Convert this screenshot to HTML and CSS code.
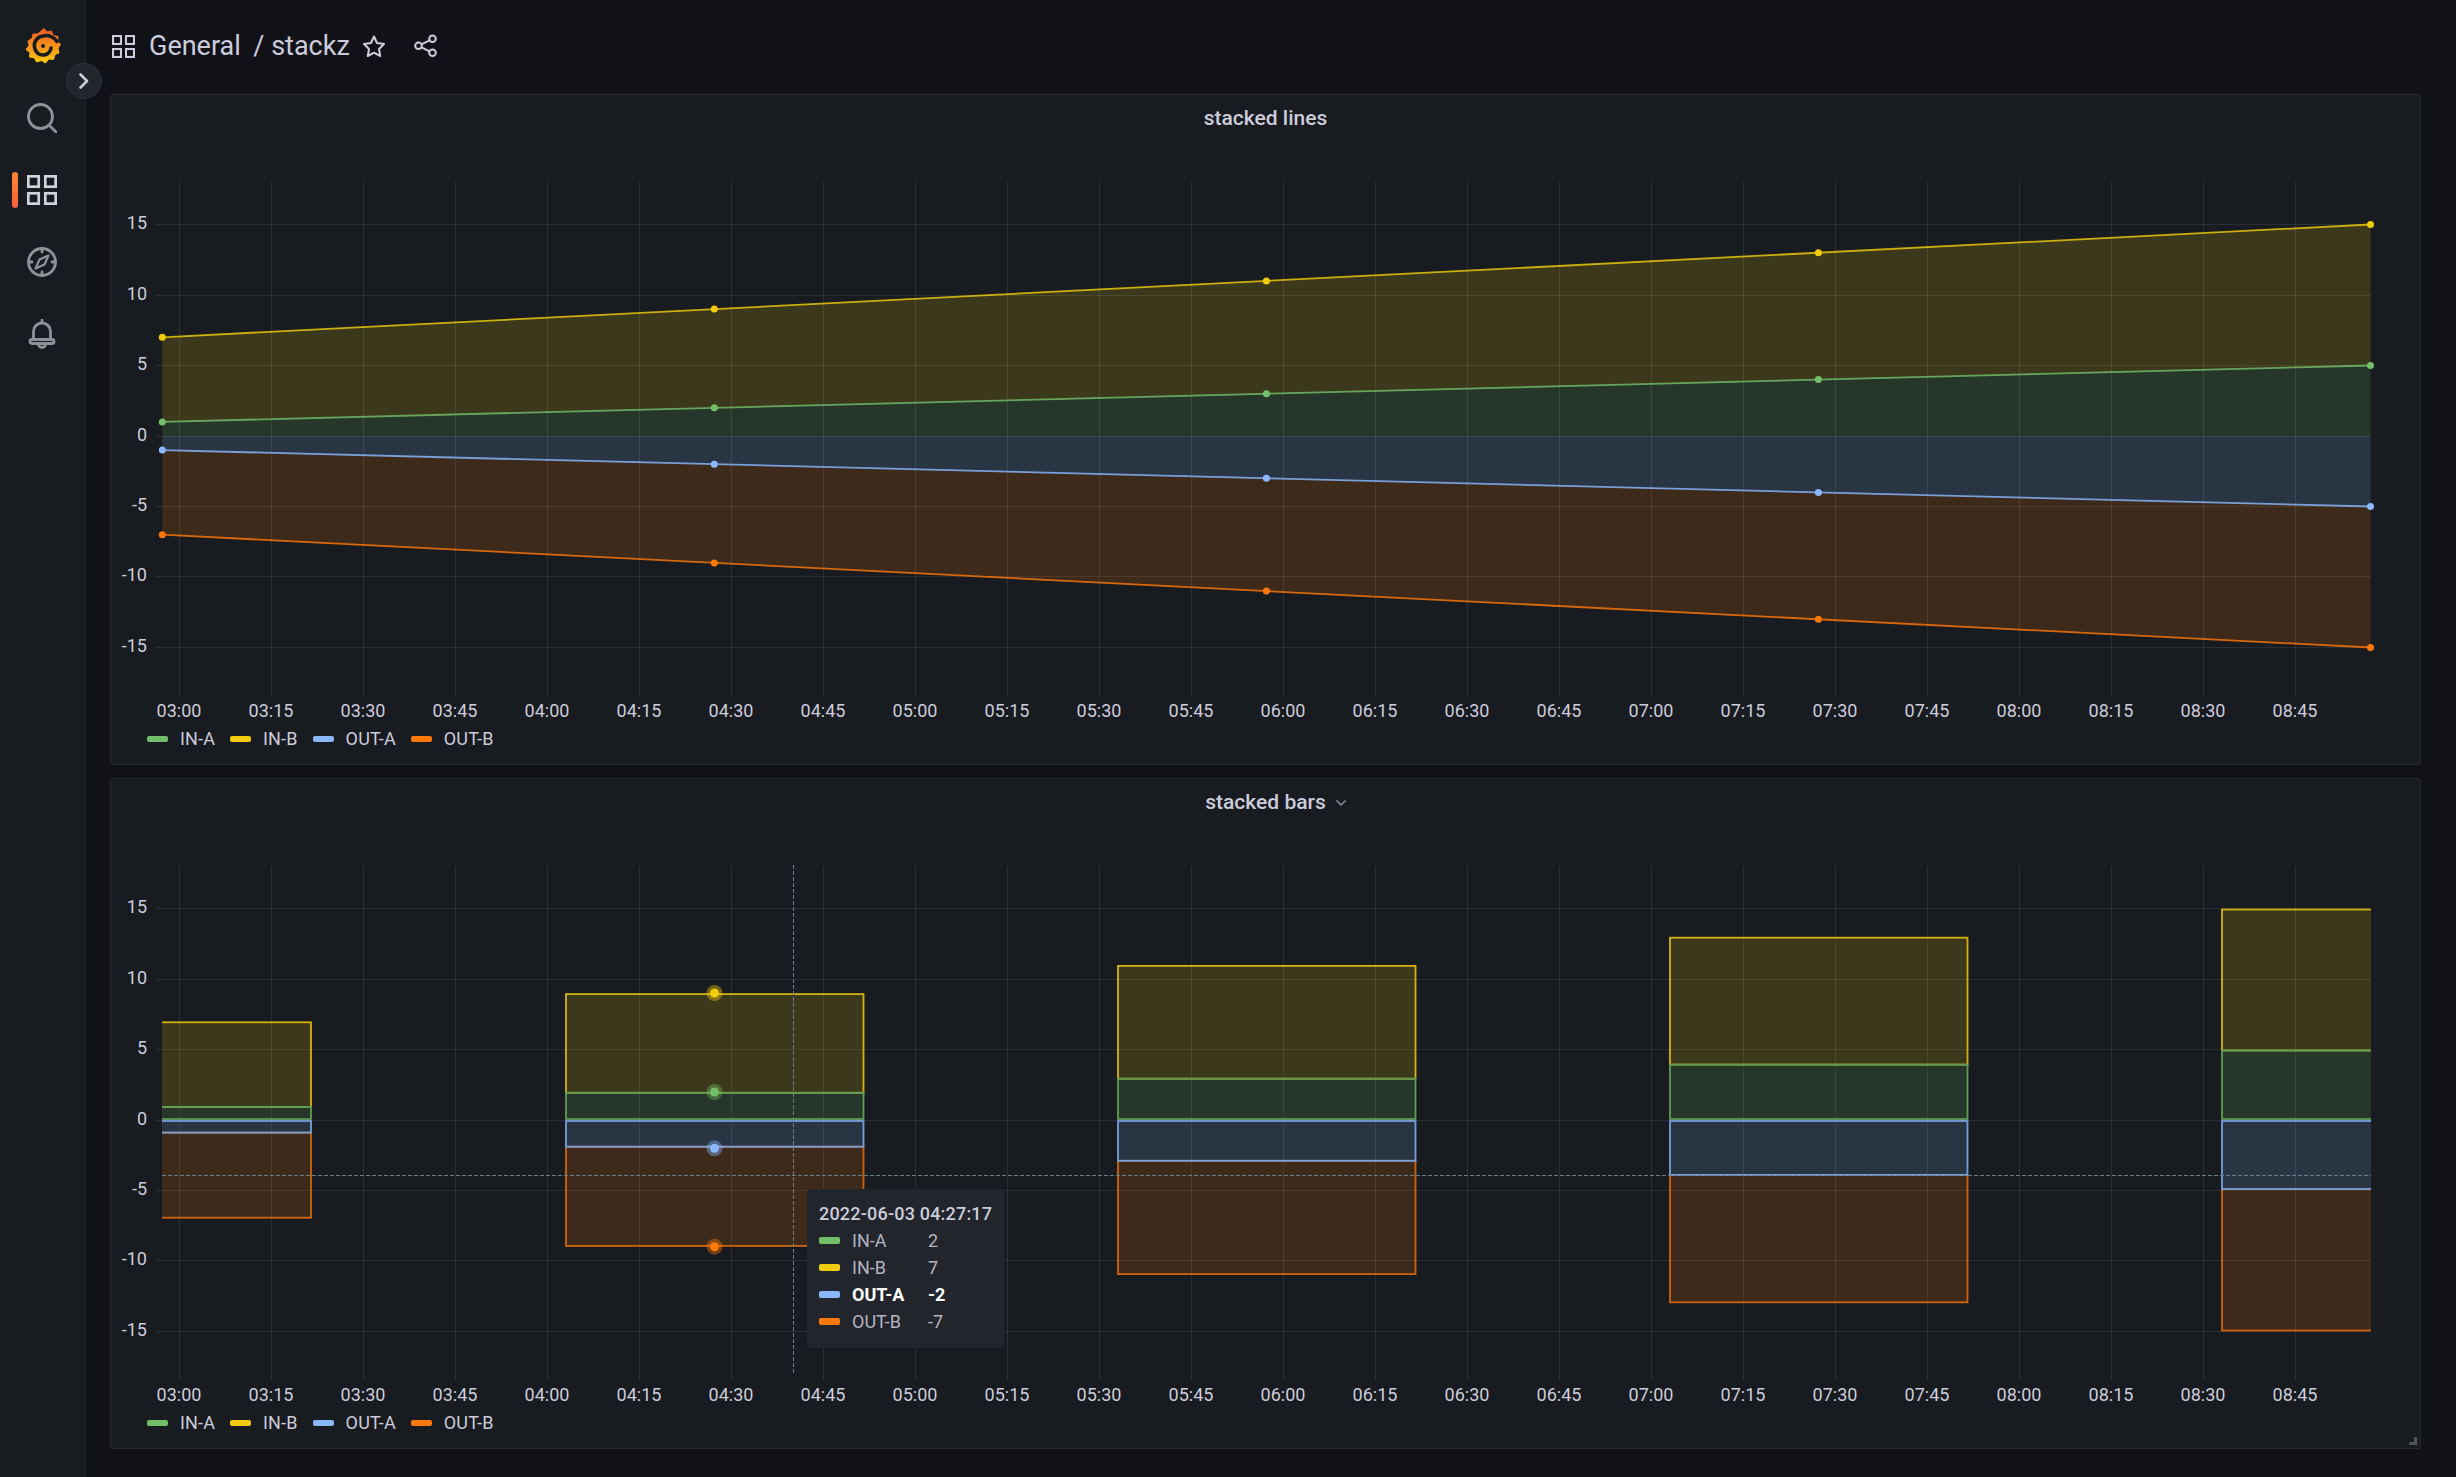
FILE: index.html
```html
<!DOCTYPE html>
<html lang="en">
<head>
<meta charset="utf-8">
<title>stackz</title>
<link rel="stylesheet" href="styles.css">
</head>
<body>
<aside class="sidebar">
  <svg class="logo" viewBox="0 0 36 36">
    <defs><linearGradient id="lg" x1="0" y1="0" x2="0" y2="1"><stop offset="0" stop-color="#f05a28"/><stop offset="1" stop-color="#fbca0a"/></linearGradient></defs>
    <polygon class="logo-body" points="15.5,3.5 19,0.5 22,4 26.5,3 28,7.5 33,8.5 32.5,13 35.5,16.5 33,20 34,25 30,26.5 28.5,31.5 24,31 20.5,35 16.5,32.5 11.5,34 9.5,30 4.5,29 5,24.5 1,21.5 4,17.5 3,13 7,10.5 8,6 12.5,6"/>
    <path class="logo-dark" d="M32 13.5C29 8.500 23 6.500 18 8A9.600 9.600 0 0 0 9.500 19C10 24 14 27.500 19 27A8 8 0 0 0 26 20"/>
    <circle class="logo-spot" cx="18" cy="18" r="2"/>
  </svg>
  <nav class="side-icons">
    <svg class="side-icon" viewBox="0 0 30 30"><circle cx="13.500" cy="13.500" r="12"/><path d="M22.500 22.500L29 29"/></svg>
    <div class="side-active">
      <span class="active-bar"></span>
      <svg class="side-icon on" viewBox="2 2 20 20"><rect x="2.900" y="2.900" width="6.900" height="6.900"/><rect x="14.200" y="2.900" width="6.900" height="6.900"/><rect x="2.900" y="14.200" width="6.900" height="6.900"/><rect x="14.200" y="14.200" width="6.900" height="6.900"/></svg>
    </div>
    <svg class="side-icon" viewBox="0 0 30 30"><circle cx="15" cy="15" r="13.500"/><path d="M15 1.500V5M15 25v3.500M1.500 15H5M25 15h3.500"/><path class="needle" d="M21.500 8.500L17.500 17.500 8.500 21.500 12.500 12.500Z"/></svg>
    <svg class="side-icon" viewBox="0 0 30 30"><path d="M15 1v3M6.500 20v-7.500C6.500 7.500 10.500 4 15 4s8.500 3.500 8.500 8.500V20M5 20.500h20c1.500 0 2 1 2 2s-.5 2-2 2H5c-1.500 0-2-1-2-2s.5-2 2-2ZM11.500 25c0 2 1.500 3.500 3.500 3.500s3.500-1.500 3.500-3.500"/></svg>
  </nav>
</aside>
<button class="toggle" type="button" aria-label="Expand"><svg viewBox="0 0 12 18"><path d="M2.500 2.500L9 9l-6.500 6.500"/></svg></button>
<main class="main">
  <header class="topbar">
    <svg class="nav-icon grid-icon" viewBox="2 2 20 20"><rect x="2.900" y="2.900" width="6.900" height="6.900"/><rect x="14.200" y="2.900" width="6.900" height="6.900"/><rect x="2.900" y="14.200" width="6.900" height="6.900"/><rect x="14.200" y="14.200" width="6.900" height="6.900"/></svg>
    <h1 class="crumbs"><span>General</span><span class="crumb-sep">/ stackz</span></h1>
    <svg class="nav-icon star" viewBox="0 0 24 24"><polygon points="12,2.500 15,9 22,10 17,15 18.200,22 12,18.700 5.800,22 7,15 2,10 9,9"/></svg>
    <svg class="nav-icon share" viewBox="0 0 24 24"><circle cx="19.500" cy="4.700" r="3.300"/><circle cx="5.500" cy="11.800" r="3.300"/><circle cx="19.500" cy="18.800" r="3.300"/><path d="M8.500 10.300L16.500 6.300M8.500 13.300L16.500 17.300"/></svg>
  </header>
  <section class="panels">
    <article class="panel">
      <h2 class="panel-title"><span class="title-text">stacked lines</span></h2>
      <svg class="chart" viewBox="111 165 2309 560">
        <defs>
          <g id="grid" class="grid">
            <path d="M156 224.500H2371M156 295.500H2371M156 365.500H2371M156 436.500H2371M156 506.500H2371M156 576.500H2371M156 647.500H2371"/>
            <path d="M179.500 182V696M271.500 182V696M363.500 182V696M455.500 182V696M547.500 182V696M639.500 182V696M731.500 182V696M823.500 182V696M915.500 182V696M1007.500 182V696M1099.500 182V696M1191.500 182V696M1283.500 182V696M1375.500 182V696M1467.500 182V696M1559.500 182V696M1651.500 182V696M1743.500 182V696M1835.500 182V696M1927.500 182V696M2019.500 182V696M2111.500 182V696M2203.500 182V696M2295.500 182V696"/>
          </g>
          <clipPath id="plot"><rect x="162" y="170" width="2209" height="530"/></clipPath>
        </defs>
        <use href="#grid"/>
        <polygon class="fill yellow" points="162.300,337.300 2370.500,224.500 2370.500,365.500 162.300,421.900"/>
        <polygon class="fill green" points="162.300,421.900 2370.500,365.500 2370.500,436 162.300,436"/>
        <polygon class="fill blue" points="162.300,436 2370.500,436 2370.500,506.500 162.300,450.100"/>
        <polygon class="fill orange" points="162.300,450.100 2370.500,506.500 2370.500,647.500 162.300,534.700"/>
        <path class="line yellow" d="M162.300 337.300L2370.500 224.500"/>
        <path class="line green" d="M162.300 421.900L2370.500 365.500"/>
        <path class="line blue" d="M162.300 450.100L2370.500 506.500"/>
        <path class="line orange" d="M162.300 534.700L2370.500 647.500"/>
        <g class="dots yellow"><circle cx="162.300" cy="337.300" r="3.500"/><circle cx="714.300" cy="309.100" r="3.500"/><circle cx="1266.400" cy="280.900" r="3.500"/><circle cx="1818.400" cy="252.700" r="3.500"/><circle cx="2370.500" cy="224.500" r="3.500"/></g>
        <g class="dots green"><circle cx="162.300" cy="421.900" r="3.500"/><circle cx="714.300" cy="407.800" r="3.500"/><circle cx="1266.400" cy="393.700" r="3.500"/><circle cx="1818.400" cy="379.600" r="3.500"/><circle cx="2370.500" cy="365.500" r="3.500"/></g>
        <g class="dots blue"><circle cx="162.300" cy="450.100" r="3.500"/><circle cx="714.300" cy="464.200" r="3.500"/><circle cx="1266.400" cy="478.300" r="3.500"/><circle cx="1818.400" cy="492.400" r="3.500"/><circle cx="2370.500" cy="506.500" r="3.500"/></g>
        <g class="dots orange"><circle cx="162.300" cy="534.700" r="3.500"/><circle cx="714.300" cy="562.900" r="3.500"/><circle cx="1266.400" cy="591.100" r="3.500"/><circle cx="1818.400" cy="619.300" r="3.500"/><circle cx="2370.500" cy="647.500" r="3.500"/></g>
        <g class="ylabels"><text x="147" y="229">15</text><text x="147" y="300">10</text><text x="147" y="370">5</text><text x="147" y="441">0</text><text x="147" y="511">-5</text><text x="147" y="581">-10</text><text x="147" y="652">-15</text></g>
        <g class="xlabels"><text x="179" y="717">03:00</text><text x="271" y="717">03:15</text><text x="363" y="717">03:30</text><text x="455" y="717">03:45</text><text x="547" y="717">04:00</text><text x="639" y="717">04:15</text><text x="731" y="717">04:30</text><text x="823" y="717">04:45</text><text x="915" y="717">05:00</text><text x="1007" y="717">05:15</text><text x="1099" y="717">05:30</text><text x="1191" y="717">05:45</text><text x="1283" y="717">06:00</text><text x="1375" y="717">06:15</text><text x="1467" y="717">06:30</text><text x="1559" y="717">06:45</text><text x="1651" y="717">07:00</text><text x="1743" y="717">07:15</text><text x="1835" y="717">07:30</text><text x="1927" y="717">07:45</text><text x="2019" y="717">08:00</text><text x="2111" y="717">08:15</text><text x="2203" y="717">08:30</text><text x="2295" y="717">08:45</text></g>
      </svg>
      <ul class="legend">
        <li class="legend-item"><i class="swatch sw-green"></i>IN-A</li>
        <li class="legend-item"><i class="swatch sw-yellow"></i>IN-B</li>
        <li class="legend-item"><i class="swatch sw-blue"></i>OUT-A</li>
        <li class="legend-item"><i class="swatch sw-orange"></i>OUT-B</li>
      </ul>
    </article>
    <article class="panel">
      <h2 class="panel-title"><span class="title-text">stacked bars<svg class="title-caret" viewBox="0 0 12 8"><path d="M1.500 1.500L6 6l4.500-4.500"/></svg></span></h2>
      <svg class="chart" viewBox="111 165 2309 560">
        <use href="#grid"/>
        <g clip-path="url(#plot)">
          <g class="bars orange"><rect x="14" y="448.600" width="297" height="85.100"/><rect x="566" y="462.700" width="297.500" height="99.200"/><rect x="1118" y="476.800" width="297.500" height="113.300"/><rect x="1670" y="490.900" width="297.500" height="127.400"/><rect x="2222" y="505" width="297" height="141.500"/></g>
          <g class="bars yellow"><rect x="14" y="338.300" width="297" height="84.600"/><rect x="566" y="310.100" width="297.500" height="98.700"/><rect x="1118" y="281.900" width="297.500" height="112.800"/><rect x="1670" y="253.700" width="297.500" height="126.900"/><rect x="2222" y="225.500" width="297" height="141"/></g>
          <g class="bars green"><rect x="14" y="422.900" width="297" height="12.100"/><rect x="566" y="408.800" width="297.500" height="26.200"/><rect x="1118" y="394.700" width="297.500" height="40.300"/><rect x="1670" y="380.600" width="297.500" height="54.400"/><rect x="2222" y="366.500" width="297" height="68.500"/></g>
          <g class="bars blue"><rect x="14" y="437" width="297" height="11.600"/><rect x="566" y="437" width="297.500" height="25.700"/><rect x="1118" y="437" width="297.500" height="39.800"/><rect x="1670" y="437" width="297.500" height="53.900"/><rect x="2222" y="437" width="297" height="68"/></g>
        </g>
        <g class="hover yellow"><circle class="halo" cx="714.500" cy="309" r="8"/><circle cx="714.500" cy="309" r="4.500"/></g>
        <g class="hover green"><circle class="halo" cx="714.500" cy="408" r="8"/><circle cx="714.500" cy="408" r="4.500"/></g>
        <g class="hover blue"><circle class="halo" cx="714.500" cy="464.300" r="8"/><circle cx="714.500" cy="464.300" r="4.500"/></g>
        <g class="hover orange"><circle class="halo" cx="714.500" cy="562.700" r="8"/><circle cx="714.500" cy="562.700" r="4.500"/></g>
        <path class="cross" d="M793.500 181V689M162 491.500H2371"/>
        <g class="ylabels"><text x="147" y="229">15</text><text x="147" y="300">10</text><text x="147" y="370">5</text><text x="147" y="441">0</text><text x="147" y="511">-5</text><text x="147" y="581">-10</text><text x="147" y="652">-15</text></g>
        <g class="xlabels"><text x="179" y="717">03:00</text><text x="271" y="717">03:15</text><text x="363" y="717">03:30</text><text x="455" y="717">03:45</text><text x="547" y="717">04:00</text><text x="639" y="717">04:15</text><text x="731" y="717">04:30</text><text x="823" y="717">04:45</text><text x="915" y="717">05:00</text><text x="1007" y="717">05:15</text><text x="1099" y="717">05:30</text><text x="1191" y="717">05:45</text><text x="1283" y="717">06:00</text><text x="1375" y="717">06:15</text><text x="1467" y="717">06:30</text><text x="1559" y="717">06:45</text><text x="1651" y="717">07:00</text><text x="1743" y="717">07:15</text><text x="1835" y="717">07:30</text><text x="1927" y="717">07:45</text><text x="2019" y="717">08:00</text><text x="2111" y="717">08:15</text><text x="2203" y="717">08:30</text><text x="2295" y="717">08:45</text></g>
      </svg>
      <ul class="legend">
        <li class="legend-item"><i class="swatch sw-green"></i>IN-A</li>
        <li class="legend-item"><i class="swatch sw-yellow"></i>IN-B</li>
        <li class="legend-item"><i class="swatch sw-blue"></i>OUT-A</li>
        <li class="legend-item"><i class="swatch sw-orange"></i>OUT-B</li>
      </ul>
      <div class="tooltip">
        <div class="tip-title">2022-06-03 04:27:17</div>
        <div class="tip-rows">
          <div class="tip-row"><i class="swatch sw-green"></i><span>IN-A</span><span>2</span></div>
          <div class="tip-row"><i class="swatch sw-yellow"></i><span>IN-B</span><span>7</span></div>
          <div class="tip-row strong"><i class="swatch sw-blue"></i><span>OUT-A</span><span>-2</span></div>
          <div class="tip-row"><i class="swatch sw-orange"></i><span>OUT-B</span><span>-7</span></div>
        </div>
      </div>
      <span class="resize"></span>
    </article>
  </section>
</main>
</body>
</html>
```
FILE: styles.css
```css
* { box-sizing: border-box; }
html, body { height: 100%; }
body {
  margin: 0;
  display: flex;
  background: #111217;
  color: #ccccdc;
  font-family: Roboto, "Liberation Sans", sans-serif;
  font-size: 18px;
  overflow: hidden;
}
.sidebar {
  width: 86px;
  flex: none;
  background: #181b1f;
  border-right: 1px solid #25282c;
  display: flex;
  flex-direction: column;
  align-items: flex-start;
  padding: 28px 0 0 26px;
}
.logo { width: 36px; height: 36px; display: block; margin-left: -1px; }
.logo-body { fill: url(#lg); stroke: url(#lg); stroke-width: 1; stroke-linejoin: round; }
.logo-dark { fill: none; stroke: #181b1f; stroke-width: 3.6; stroke-linecap: round; }
.logo-spot { fill: #181b1f; }
.side-icons { display: flex; flex-direction: column; gap: 42px; margin-top: 39px; margin-left: 1px; }
.side-icon { width: 30px; height: 30px; display: block; fill: none; stroke: #91919c; stroke-width: 2.800; stroke-linecap: round; stroke-linejoin: round; }
.side-icon.on { stroke: #d2d2de; stroke-width: 1.800; stroke-linecap: butt; stroke-linejoin: miter; }
.needle { stroke-width: 2.200; }
.side-active { position: relative; }
.active-bar {
  position: absolute;
  left: -15px;
  top: -3px;
  width: 6px;
  height: 36px;
  border-radius: 3px;
  background: linear-gradient(180deg, #ff8833, #f55f3e);
}
.toggle {
  position: absolute;
  left: 66px;
  top: 63px;
  width: 36px;
  height: 36px;
  padding: 0;
  border-radius: 50%;
  background: #22252b;
  border: 1px solid #2e3136;
  display: flex;
  align-items: center;
  justify-content: center;
}
.toggle svg { width: 12px; height: 18px; fill: none; stroke: #ccccdc; stroke-width: 2.600; stroke-linecap: round; stroke-linejoin: round; }
.main { flex: 1; min-width: 0; display: flex; flex-direction: column; }
.topbar { height: 94px; flex: none; display: flex; align-items: center; padding: 0 0 2px 26px; }
.nav-icon { display: block; fill: none; stroke: #ccccdc; }
.grid-icon { width: 23px; height: 23px; stroke-width: 1.800; }
.star { width: 24px; height: 24px; stroke-width: 2; stroke-linejoin: round; margin-left: 12.500px; }
.share { width: 24px; height: 24px; stroke-width: 2; margin-left: 27px; }
.crumbs { margin: 0 0 0 14px; font-size: 27px; font-weight: 400; line-height: 32px; display: flex; color: #ccccdc; }
.crumb-sep { margin-left: 12.500px; }
.panels { display: flex; flex-direction: column; gap: 13px; padding: 0 35px 0 24px; }
.panel {
  position: relative;
  height: 671px;
  background: #181b1f;
  border: 1px solid #25282c;
  border-radius: 3px;
}
.panel-title {
  margin: 0 0 25px;
  height: 45px;
  font-size: 21px;
  font-weight: 500;
  line-height: 46px;
  text-align: center;
  color: #ccccdc;
}
.title-text { position: relative; display: inline-block; }
.title-caret { position: absolute; left: 100%; top: 20px; width: 12px; height: 8px; margin-left: 9px; fill: none; stroke: #8e8e99; stroke-width: 1.500; }
.chart { display: block; width: 2309px; height: 560px; }
.grid path { fill: none; stroke: rgba(240, 250, 255, .09); stroke-width: 1; }
.fill { stroke: none; opacity: .17; }
.fill.yellow, .hover.yellow, .dots.yellow { fill: #f2cc0c; }
.fill.green, .hover.green, .dots.green { fill: #73bf69; }
.fill.blue, .hover.blue, .dots.blue { fill: #8ab8ff; }
.fill.orange, .hover.orange, .dots.orange { fill: #ff780a; }
.line { fill: none; stroke-width: 1.800; opacity: .82; }
.line.yellow { stroke: #f2cc0c; }
.line.green { stroke: #73bf69; }
.line.blue { stroke: #8ab8ff; }
.line.orange { stroke: #ff780a; }
.bars rect { stroke-width: 1.800; fill-opacity: .17; }
.bars.yellow rect { stroke: #d4b30f; fill: #f2cc0c; }
.bars.green rect { stroke: #5f9c57; fill: #73bf69; }
.bars.blue rect { stroke: #769fdc; fill: #8ab8ff; }
.bars.orange rect { stroke: #cf640e; fill: #ff780a; }
.halo { opacity: .4; }
.cross { fill: none; stroke: #68808c; stroke-width: 1; stroke-dasharray: 4 2; }
.ylabels text, .xlabels text { font-family: Roboto, "Liberation Sans", sans-serif; font-size: 18px; fill: #ccccdc; }
.ylabels text { text-anchor: end; }
.xlabels text { text-anchor: middle; }
.legend {
  list-style: none;
  margin: 0;
  padding: 0 0 0 36px;
  height: 28px;
  display: flex;
  align-items: center;
  gap: 15px;
  letter-spacing: .15px;
}
.legend-item { display: flex; align-items: center; gap: 12px; line-height: 28px; }
.swatch { display: block; width: 21px; height: 6.500px; border-radius: 2px; flex: none; }
.sw-green { background: #73bf69; }
.sw-yellow { background: #f2cc0c; }
.sw-blue { background: #8ab8ff; }
.sw-orange { background: #ff780a; }
.tooltip {
  position: absolute;
  left: 696px;
  top: 410px;
  width: 197px;
  height: 159px;
  padding: 13px 12px 12px;
  background: #22252b;
  border-radius: 3px;
}
.tip-title { line-height: 24px; font-weight: 500; white-space: nowrap; letter-spacing: .2px; }
.tip-rows { margin-top: 1px; }
.tip-row { display: grid; grid-template-columns: 21px 64px auto; column-gap: 12px; align-items: center; height: 27px; color: #b4b4c2; }
.tip-row.strong { color: #fff; font-weight: 700; }
.resize {
  position: absolute;
  right: 3px;
  bottom: 3px;
  width: 8px;
  height: 8px;
  border-right: 3px solid #555;
  border-bottom: 3px solid #555;
}
```
